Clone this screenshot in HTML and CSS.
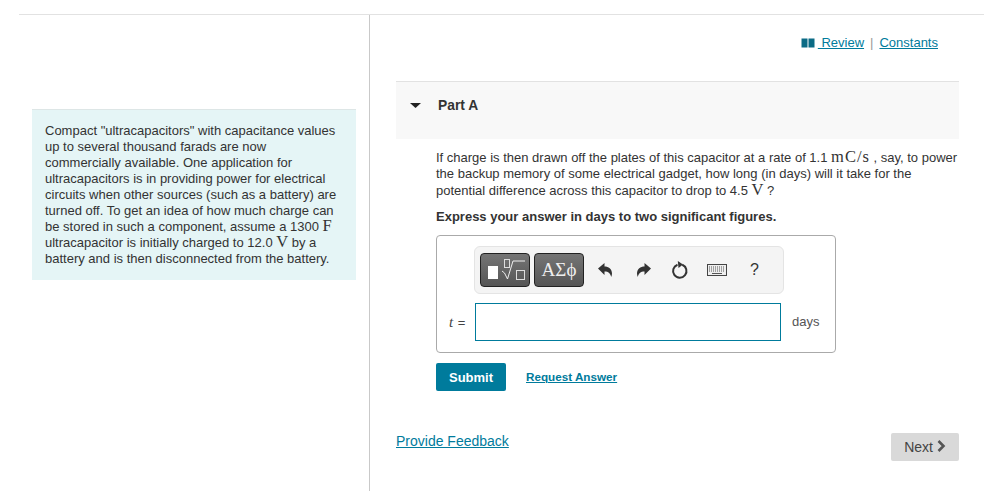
FILE: index.html
```html
<!DOCTYPE html>
<html lang="en">
<head>
<meta charset="utf-8">
<title>Part A</title>
<link rel="stylesheet" href="styles.css">
</head>
<body>
<div class="page">
  <aside class="left">
    <div class="intro">Compact "ultracapacitors" with capacitance values up to several thousand farads are now commercially available. One application for ultracapacitors is in providing power for electrical circuits when other sources (such as a battery) are turned off. To get an idea of how much charge can be stored in such a component, assume a 1300 <span class="math">F</span> ultracapacitor is initially charged to 12.0 <span class="math">V</span> by a battery and is then disconnected from the battery.</div>
  </aside>
  <main class="right">
    <div class="toplinks">
      <svg class="book" width="14" height="10" viewBox="0 0 14 10"><path fill="#0b6b85" d="M.5 .5h6v9h-6zM7.500 .5h6v9h-6z"/></svg>
      <a href="#" class="link">&nbsp;Review</a>
      <span class="sep">|</span>
      <a href="#" class="link">Constants</a>
    </div>
    <section class="part">
      <svg class="caret" width="11" height="5" viewBox="0 0 11 5"><path fill="#222" d="M0 0h11L5.500 5z"/></svg>
      <h2 class="part-title">Part A</h2>
    </section>
    <div class="question">
      <p class="q-text">If charge is then drawn off the plates of this capacitor at a rate of 1.1 <span class="math mc">mC/s</span> , say, to power the backup memory of some electrical gadget, how long (in days) will it take for the potential difference across this capacitor to drop to 4.5 <span class="math tall">V</span> ?</p>
      <p class="q-bold">Express your answer in days to two significant figures.</p>
      <div class="answer">
        <div class="toolbar">
          <button class="tbtn tbtn-a" type="button" aria-label="Templates">
            <svg width="48" height="32" viewBox="0 0 48 32"><rect x="7" y="12" width="10" height="13" fill="#fff"/><rect x="23.500" y="5.500" width="5" height="8" fill="none" stroke="#ddd"/><path fill="none" stroke="#eee" d="M21 17l2.500 2 3 6 5.500-18h12"/><rect x="35.500" y="16.500" width="8" height="9" fill="none" stroke="#ddd"/></svg>
          </button>
          <button class="tbtn tbtn-b" type="button">ΑΣϕ</button>
          <svg class="ticon t1" width="14" height="14" viewBox="0 0 14 14"><path fill="#333" d="M0 5.500 6.500 0v3.500C10.500 3.500 14 6 14 10.500c0 1.200-.3 2.400-.8 3.500C12.500 10.500 10.500 8.500 6.500 8.500V12z"/></svg>
          <svg class="ticon t2" width="14" height="14" viewBox="0 0 14 14"><path fill="#333" d="M14 5.500 7.500 0v3.500C3.500 3.500 0 6 0 10.500c0 1.200.3 2.400.8 3.500C1.500 10.500 3.500 8.500 7.500 8.500V12z"/></svg>
          <svg class="ticon t3" width="18" height="18" viewBox="0 0 18 18"><path fill="none" stroke="#333" stroke-width="2" d="M11.300 3.800A6.700 6.700 0 1 1 6.500 3.700"/><path fill="#333" d="M6.800 0 12 3.500 7.500 7z"/></svg>
          <svg class="ticon t4" width="20" height="12" viewBox="0 0 20 12"><rect x=".5" y=".5" width="19" height="11" fill="#eee" stroke="#444"/><path stroke="#555" stroke-dasharray="1 1" d="M2 3h16M2 5h16M2 7h16"/><path stroke="#555" d="M5 9.500h10"/></svg>
          <span class="help">?</span>
        </div>
        <div class="entry">
          <span class="label"><i class="var">t</i> =</span>
          <input class="field" type="text" aria-label="t">
          <span class="unit">days</span>
        </div>
      </div>
      <div class="actions">
        <button class="submit" type="button">Submit</button>
        <a href="#" class="request">Request Answer</a>
      </div>
    </div>
    <div class="footer">
      <a href="#" class="feedback">Provide Feedback</a>
      <button class="next" type="button">Next <svg width="9" height="12" viewBox="0 0 9 12"><path fill="none" stroke="#555" stroke-width="2.600" d="M1.500 1l5 5-5 5"/></svg></button>
    </div>
  </main>
</div>
</body>
</html>
```
FILE: styles.css
```css
* { box-sizing: border-box; }
html, body { margin: 0; height: 100%; }
body {
  padding: 14px 15px 0 19px;
  height: 491px;
  overflow: hidden;
  background: #fff;
  font-family: "Liberation Sans", Arial, sans-serif;
  font-size: 13px;
  line-height: 16px;
  color: #333;
}
.page {
  display: grid;
  grid-template-columns: 350px 1fr;
  height: 477px;
  border-top: 1px solid #e2e2e2;
}
.left { padding: 94px 13px 0; }
.intro {
  background: #e5f5f6;
  border-top: 1px solid #dde6e6;
  padding: 13px 18px 13px 13px;
  height: 171px;
}
.math { font-family: "Liberation Serif", serif; font-size: 16.5px; line-height: 0; }
.mc { letter-spacing: 1px; }
.tall { line-height: 16px; }
.right {
  border-left: 1px solid #c9c9c9;
  padding: 0 25px 0 26px;
  display: flex;
  flex-direction: column;
}
.toplinks {
  display: flex;
  justify-content: flex-end;
  gap: 6px;
  padding: 20px 21px 0 0;
  height: 66px;
}
.link, .feedback, .request { color: #007b9c; text-decoration: underline; }
.sep { color: #999; }
.book { margin: 3px -3px 0 0; }
.part {
  display: flex;
  height: 58px;
  padding: 15px 0 0 14px;
  background: #f8f8f8;
  border-top: 1px solid #e2e2e2;
}
.caret { margin-top: 6px; }
.part-title { margin: 0 0 0 17px; font-size: 13.8px; line-height: 18px; font-weight: bold; }
.question { padding: 11px 0 0 40px; }
.q-text { margin: 0; }
.q-bold { margin: 10px 0 0; font-weight: bold; font-size: 13px; line-height: 16px; }
.answer {
  margin-top: 10px;
  width: 400px;
  height: 118px;
  border: 1px solid #aaa;
  border-radius: 4px;
  padding: 10px 0 0 12px;
}
.toolbar {
  display: flex;
  align-items: center;
  margin-left: 25px;
  width: 310px;
  height: 48px;
  padding: 0 0 0 5px;
  background: #f4f4f4;
  border: 1px solid #e4e4e4;
  border-radius: 6px;
}
.tbtn {
  height: 34px;
  padding: 0;
  border: 1px solid #222;
  border-radius: 4px;
  background: linear-gradient(#757575, #555);
  color: #eee;
}
.tbtn-a { width: 50px; display: flex; align-items: center; justify-content: center; }
.tbtn-b { width: 50px; margin-left: 4px; font-family: "Liberation Serif", serif; font-size: 19px; }
.ticon { flex: none; }
.t1 { margin-left: 14px; }
.t2 { margin-left: 25px; }
.t3 { margin-left: 20px; }
.t4 { margin-left: 18px; }
.help { margin-left: 23px; font-size: 16px; }
.entry { display: flex; align-items: center; margin-top: 9px; }
.label { width: 26px; font-size: 13px; color: #444; font-family: "Liberation Sans", sans-serif; }
.var { margin-right: 1px; font-family: "Liberation Serif", serif; font-size: 15px; }
.field {
  width: 306px;
  height: 38px;
  border: 1px solid #007b9c;
  background: #fff;
  outline: 0;
}
.unit { margin-left: 11px; font-size: 13px; color: #555; }
.actions { display: flex; align-items: center; margin-top: 10px; gap: 20px; }
.submit {
  width: 70px;
  height: 28px;
  border: 0;
  border-radius: 2px;
  background: #007b9c;
  color: #fff;
  font: bold 13px "Liberation Sans", sans-serif;
}
.request { font-size: 11.7px; font-weight: bold; }
.footer {
  display: flex;
  justify-content: space-between;
  align-items: flex-start;
  margin-top: 42px;
}
.feedback { font-size: 14px; }
.next {
  width: 68px;
  height: 28px;
  border: 0;
  border-radius: 2px;
  background: #d9d9d9;
  color: #444;
  font: 14px "Liberation Sans", sans-serif;
}
```
